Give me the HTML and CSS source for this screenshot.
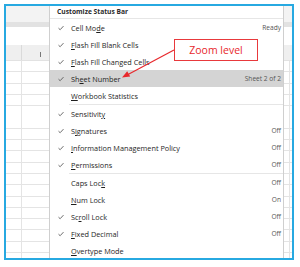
FILE: index.html
```html
<!DOCTYPE html>
<html>
<head>
<meta charset="utf-8">
<link rel="stylesheet" href="styles.css">
</head>
<body>
<div class="frame">
  <div class="sheet sheet-left">
    <div class="ribbon"></div>
    <div class="band"></div>
    <div class="formula"></div>
    <div class="colhead"><span class="colmark"></span></div>
    <div class="grid"></div>
  </div>
  <div class="menu">
    <div class="menu-title">Customize Status Bar</div>
    <div class="item"><span class="chk"><svg viewBox="0 0 7 6" width="7" height="6"><path d="M0.6 3.2 L2.5 5 L6.4 0.8" fill="none" stroke="#555" stroke-width="1"/></svg></span><span class="lbl">Cell Mo<u>d</u>e</span><span class="val">Ready</span></div>
    <div class="item"><span class="chk"><svg viewBox="0 0 7 6" width="7" height="6"><path d="M0.6 3.2 L2.5 5 L6.4 0.8" fill="none" stroke="#555" stroke-width="1"/></svg></span><span class="lbl"><u>F</u>lash Fill Blank Cells</span><span class="val"></span></div>
    <div class="item"><span class="chk"><svg viewBox="0 0 7 6" width="7" height="6"><path d="M0.6 3.2 L2.5 5 L6.4 0.8" fill="none" stroke="#555" stroke-width="1"/></svg></span><span class="lbl"><u>F</u>lash Fill Changed Cells</span><span class="val"></span></div>
    <div class="item hl"><span class="chk"><svg viewBox="0 0 7 6" width="7" height="6"><path d="M0.6 3.2 L2.5 5 L6.4 0.8" fill="none" stroke="#555" stroke-width="1"/></svg></span><span class="lbl">Sh<u>e</u>et Number</span><span class="val">Sheet 2 of 2</span></div>
    <div class="item"><span class="chk"></span><span class="lbl"><u>W</u>orkbook Statistics</span><span class="val"></span></div>
    <div class="sep"></div>
    <div class="item"><span class="chk"><svg viewBox="0 0 7 6" width="7" height="6"><path d="M0.6 3.2 L2.5 5 L6.4 0.8" fill="none" stroke="#555" stroke-width="1"/></svg></span><span class="lbl">Sensitivit<u>y</u></span><span class="val"></span></div>
    <div class="item"><span class="chk"><svg viewBox="0 0 7 6" width="7" height="6"><path d="M0.6 3.2 L2.5 5 L6.4 0.8" fill="none" stroke="#555" stroke-width="1"/></svg></span><span class="lbl">S<u>i</u>gnatures</span><span class="val">Off</span></div>
    <div class="item"><span class="chk"><svg viewBox="0 0 7 6" width="7" height="6"><path d="M0.6 3.2 L2.5 5 L6.4 0.8" fill="none" stroke="#555" stroke-width="1"/></svg></span><span class="lbl"><u>I</u>nformation Management Policy</span><span class="val">Off</span></div>
    <div class="item"><span class="chk"><svg viewBox="0 0 7 6" width="7" height="6"><path d="M0.6 3.2 L2.5 5 L6.4 0.8" fill="none" stroke="#555" stroke-width="1"/></svg></span><span class="lbl"><u>P</u>ermissions</span><span class="val">Off</span></div>
    <div class="sep"></div>
    <div class="item"><span class="chk"></span><span class="lbl">Caps Loc<u>k</u></span><span class="val">Off</span></div>
    <div class="item"><span class="chk"></span><span class="lbl"><u>N</u>um Lock</span><span class="val">On</span></div>
    <div class="item"><span class="chk"><svg viewBox="0 0 7 6" width="7" height="6"><path d="M0.6 3.2 L2.5 5 L6.4 0.8" fill="none" stroke="#555" stroke-width="1"/></svg></span><span class="lbl">Sc<u>r</u>oll Lock</span><span class="val">Off</span></div>
    <div class="item"><span class="chk"><svg viewBox="0 0 7 6" width="7" height="6"><path d="M0.6 3.2 L2.5 5 L6.4 0.8" fill="none" stroke="#555" stroke-width="1"/></svg></span><span class="lbl"><u>F</u>ixed Decimal</span><span class="val">Off</span></div>
    <div class="item"><span class="chk"></span><span class="lbl"><u>O</u>vertype Mode</span><span class="val"></span></div>
  </div>
  <div class="sheet sheet-right">
    <div class="ribbon"></div>
    <div class="band"></div>
    <div class="formula"></div>
    <div class="colhead"></div>
    <div class="grid"></div>
  </div>
  <div class="callout">Zoom level</div>
  <svg class="arrow" width="60" height="34" viewBox="0 0 60 34">
    <line x1="55" y1="6" x2="9" y2="30.5" stroke="#e8282c" stroke-width="1.2"/>
    <path d="M3 33.5 L8.2 27.2 L11.2 32.4 Z" fill="#e8282c"/>
  </svg>
</div>
</body>
</html>
```
FILE: styles.css
```css
html, body {
  margin: 0;
  padding: 0;
  background: #ffffff;
}
body {
  width: 300px;
  height: 267px;
  overflow: hidden;
  font-family: "Open Sans", "Noto Sans", sans-serif;
}
.frame {
  position: relative;
  box-sizing: border-box;
  margin: 4px 0 0 4px;
  width: 290px;
  height: 256px;
  border: 2px solid #27a9e1;
  display: grid;
  grid-template-columns: 43px 235px 8px;
  overflow: hidden;
  background: #ffffff;
}
.sheet {
  display: flex;
  flex-direction: column;
}
.ribbon {
  height: 16px;
  background: #f3f3f3;
}
.band {
  height: 5px;
  background: #e2e2e2;
}
.formula {
  height: 18px;
  background: #ffffff;
}
.colhead {
  height: 15px;
  background: #efefef;
  border-bottom: 1px solid #e2e2e2;
  position: relative;
}
.sheet-left .colhead {
  background: linear-gradient(to right, transparent 15px, #dadada 15px, #dadada 16px, transparent 16px), #efefef;
}
.colmark {
  position: absolute;
  left: 34px;
  top: 7px;
  width: 1px;
  height: 5px;
  background: #777;
}
.grid {
  flex: 1;
  background-color: #ffffff;
  background-image: repeating-linear-gradient(to bottom, transparent 0, transparent 10.3px, #e4e4e4 10.3px, #e4e4e4 11.3px);
}
.sheet-left .grid {
  background-image:
    linear-gradient(to right, transparent 15px, #e4e4e4 15px, #e4e4e4 16px, transparent 16px),
    repeating-linear-gradient(to bottom, transparent 0, transparent 10.3px, #e4e4e4 10.3px, #e4e4e4 11.3px);
}
.sheet-right .grid {
  background-image:
    linear-gradient(to right, transparent 5px, #e4e4e4 5px, #e4e4e4 6px, transparent 6px),
    repeating-linear-gradient(to bottom, transparent 0, transparent 10.3px, #e4e4e4 10.3px, #e4e4e4 11.3px);
}
.menu {
  border-left: 1px solid #cfcfcf;
  border-right: 1px solid #cfcfcf;
  background: #ffffff;
  display: flex;
  flex-direction: column;
  color: #1e1e1e;
}
.menu-title {
  height: 12px;
  line-height: 12px;
  padding-left: 7px;
  font-size: 6.7px;
  font-weight: 700;
  color: #2b2b2b;
  border-bottom: 1px solid #e6e6e6;
}
.item {
  flex: 0 0 17px;
  height: 17px;
  display: flex;
  align-items: center;
  font-size: 7.3px;
}
.item.hl {
  background: #d4d4d4;
}
.chk {
  width: 21px;
  display: flex;
  justify-content: flex-end;
  box-sizing: border-box;
  padding-left: 8px;
}
.chk svg {
  display: block;
  margin-right: 7px;
}
.lbl {
  flex: 1;
  white-space: nowrap;
}
.lbl u {
  text-decoration-thickness: 1px;
  text-underline-offset: 1px;
}
.val {
  padding-right: 2px;
  font-size: 6.6px;
  color: #555;
}
.sep {
  flex: 0 0 1px;
  height: 1px;
  margin-left: 19px;
  background: #e6e6e6;
}
.callout {
  position: absolute;
  left: 168px;
  top: 33px;
  width: 84px;
  height: 22px;
  box-sizing: border-box;
  border: 1px solid #e8393c;
  background: #ffffff;
  color: #e8282c;
  font-size: 10.5px;
  display: flex;
  align-items: center;
  justify-content: center;
}
.arrow {
  position: absolute;
  left: 113px;
  top: 38px;
}
```
